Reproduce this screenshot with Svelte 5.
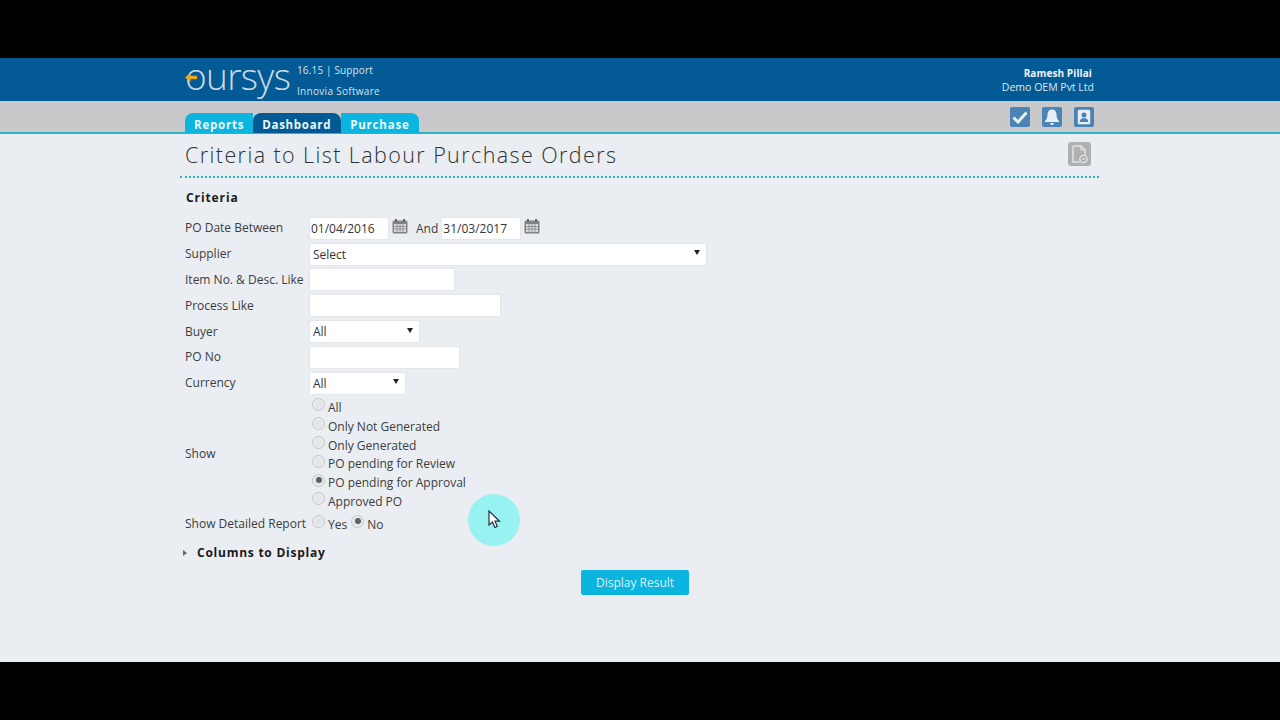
<script>
	const showOptions = [
		'All',
		'Only Not Generated',
		'Only Generated',
		'PO pending for Review',
		'PO pending for Approval',
		'Approved PO'
	];
</script>

{#snippet calendar()}
	<svg class="cal" width="16" height="15" viewBox="0 0 16 15">
		<rect x="0.5" y="1.5" width="15" height="13" rx="1.5" fill="#808285" />
		<rect x="3" y="0" width="2" height="3" fill="#67696c" />
		<rect x="11" y="0" width="2" height="3" fill="#67696c" />
		<rect x="2" y="5" width="12" height="8" fill="#dcdedf" />
		<path d="M2 7.5h12M2 10h12M5 5v8M8 5v8M11 5v8" stroke="#808285" stroke-width="0.8" />
	</svg>
{/snippet}

{#snippet radio(checked)}
	<span class="radio" class:checked></span>
{/snippet}

<div class="screen">
	<div class="bar"></div>
	<div class="app">
		<header class="top">
			<div class="brand">
				<div class="logo">
					<span class="logo-text">oursys</span>
					<svg class="arrow" width="12" height="11" viewBox="0 0 13 12">
						<path d="M0 6 6 1v3h7v4H6v3z" fill="#f2a51f" />
					</svg>
				</div>
				<div class="meta">
					<div class="version">16.15 | Support</div>
					<div>Innovia Software</div>
				</div>
			</div>
			<div class="user">
				<div class="user-name">Ramesh Pillai</div>
				<div>Demo OEM Pvt Ltd</div>
			</div>
		</header>

		<nav class="nav">
			<div class="tabs">
				<span class="tab first">Reports</span>
				<span class="tab active">Dashboard</span>
				<span class="tab last">Purchase</span>
			</div>
			<div class="nav-icons">
				<span class="nav-icon">
					<svg width="16" height="14" viewBox="0 0 16 14"><path d="M1.5 7.5 6 12 14.500 2.500" fill="none" stroke="#e8eef3" stroke-width="3" /></svg>
				</span>
				<span class="nav-icon">
					<svg width="14" height="16" viewBox="0 0 14 16"><path d="M7 0.500c-3 0-4.500 2-4.500 5 0 3.500-1 5-2.500 6.500v1h14v-1c-1.500-1.500-2.500-3-2.500-6.500 0-3-1.500-5-4.500-5zM5 14a2 2 0 0 0 4 0z" fill="#e8eef3" /></svg>
				</span>
				<span class="nav-icon">
					<svg width="14" height="16" viewBox="0 0 14 16"><rect x="0.800" y="0.800" width="12.400" height="14.400" rx="1.500" fill="#e8eef3" /><circle cx="7" cy="6" r="2.500" fill="#4a84b5" /><path d="M2.800 13c0-3 2-4 4.200-4s4.200 1 4.200 4z" fill="#4a84b5" /></svg>
				</span>
			</div>
		</nav>

		<main class="content">
			<div class="title-row">
				<h1>Criteria to List Labour Purchase Orders</h1>
				<span class="doc-btn">
					<svg width="16" height="19" viewBox="0 0 16 19">
						<path d="M1 1h8l4 4v5M1 1v16h7" fill="none" stroke="#e4e6e8" stroke-width="1.400" />
						<path d="M9 1v4h4" fill="none" stroke="#e4e6e8" stroke-width="1.200" />
						<circle cx="11.500" cy="14" r="3.700" fill="none" stroke="#e4e6e8" stroke-width="1.300" />
						<path d="M9.800 14h3.400" stroke="#e4e6e8" stroke-width="1.200" />
					</svg>
				</span>
			</div>

			<h2>Criteria</h2>

			<div class="form">
				<label for="from">PO Date Between</label>
				<div class="control">
					<input id="from" class="date" value="01/04/2016" />
					{@render calendar()}
					<span class="and">And</span>
					<input class="date" value="31/03/2017" />
					{@render calendar()}
				</div>

				<span class="lbl">Supplier</span>
				<div class="control"><div class="select supplier"><span>Select</span><i></i></div></div>

				<label for="item">Item No. &amp; Desc. Like</label>
				<div class="control"><input id="item" class="item" /></div>

				<label for="process">Process Like</label>
				<div class="control"><input id="process" class="process" /></div>

				<span class="lbl">Buyer</span>
				<div class="control"><div class="select buyer"><span>All</span><i></i></div></div>

				<label for="pono">PO No</label>
				<div class="control"><input id="pono" class="pono" /></div>

				<span class="lbl">Currency</span>
				<div class="control"><div class="select currency"><span>All</span><i></i></div></div>

				<span class="lbl">Show</span>
				<div class="radios">
					{#each showOptions as option}
						<div class="radio-row">
							{@render radio(option === 'PO pending for Approval')}
							<span>{option}</span>
						</div>
					{/each}
				</div>

				<span class="lbl">Show Detailed Report</span>
				<div class="radio-inline">
					{@render radio(false)}
					<span class="yes">Yes</span>
					{@render radio(true)}
					<span>No</span>
				</div>
			</div>

			<div class="columns">
				<span class="caret"></span>
				<span>Columns to Display</span>
			</div>

			<div class="actions">
				<button>Display Result</button>
			</div>

			<div class="pointer">
				<svg width="13" height="19" viewBox="0 0 13 19">
					<path d="M1 1v14l3.500-3 2.300 5.500 2.500-1-2.300-5.300h4.500z" fill="#fff" stroke="#22333b" stroke-width="1.200" />
				</svg>
			</div>
		</main>
	</div>
	<div class="bar"></div>
</div>

<style>
	:global(body) {
		background: #000;
	}
	.screen {
		width: 1280px;
		height: 720px;
		display: flex;
		flex-direction: column;
		font-family: 'Open Sans', sans-serif;
		font-size: 12px;
		color: #3a3d40;
		overflow: hidden;
	}
	.bar {
		height: 58px;
		background: #000;
		flex: none;
	}
	.app {
		flex: 1;
		display: flex;
		flex-direction: column;
		background: #eaedf1;
	}
	.top {
		height: 43px;
		background: #035a94;
		display: flex;
		justify-content: space-between;
		padding: 0 186px 0 184px;
		color: #dfe9f1;
		flex: none;
	}
	.brand {
		display: flex;
		gap: 7px;
	}
	.logo {
		position: relative;
		width: 106px;
		height: 43px;
	}
	.logo-text {
		position: absolute;
		left: 1px;
		top: -4px;
		font-weight: 300;
		font-size: 37px;
		line-height: 44px;
		letter-spacing: -0.7px;
		color: #c9dbe8;
	}
	.arrow {
		position: absolute;
		left: 1px;
		top: 14px;
	}
	.meta {
		font-size: 10px;
		line-height: 21px;
		padding-top: 2px;
		letter-spacing: 0.3px;
		color: #d5e2ec;
	}
	.version {
		letter-spacing: 0.15px;
	}
	.user {
		text-align: right;
		font-size: 10.500px;
		line-height: 14px;
		padding-top: 8px;
	}
	.user-name {
		font-weight: 700;
		font-size: 10px;
		letter-spacing: 0.1px;
		padding-right: 2px;
		color: #f0f4f7;
	}
	.nav {
		height: 33px;
		flex: none;
		background: #c9c9cc;
		border-bottom: 2px solid #2eb4c4;
		box-sizing: border-box;
		display: flex;
		justify-content: space-between;
		padding: 0 185px;
	}
	.tabs {
		display: flex;
		align-items: flex-start;
		padding-top: 12px;
	}
	.tab {
		height: 20px;
		line-height: 23px;
		padding: 0 9px;
		background: #0bb5e0;
		color: #eef9fc;
		font-weight: 700;
		font-size: 11.500px;
		letter-spacing: 0.8px;
	}
	.tab.first {
		border-radius: 8px 0 0 0;
	}
	.tab.active {
		background: #035a94;
		border-radius: 8px 8px 0 0;
		padding: 0 10px 0 9px;
		letter-spacing: 0.7px;
	}
	.tab.last {
		border-radius: 0 8px 0 0;
	}
	.nav-icons {
		display: flex;
		gap: 12px;
		padding: 6px 0 0;
		margin-right: 1px;
	}
	.nav-icon {
		width: 20px;
		height: 20px;
		background: #4a84b5;
		border-radius: 2px;
		display: flex;
		align-items: center;
		justify-content: center;
	}
	.content {
		position: relative;
		flex: 1;
		padding: 0 181px 0 180px;
	}
	.title-row {
		height: 44px;
		border-bottom: 2px dotted #2eb4c4;
		box-sizing: border-box;
		display: flex;
		justify-content: space-between;
		align-items: flex-start;
		padding: 7px 8px 0 5px;
	}
	h1 {
		margin: 0;
		font-size: 21.500px;
		font-weight: 300;
		line-height: 28px;
		letter-spacing: 1.41px;
		color: #2e3134;
	}
	.doc-btn {
		width: 23px;
		height: 24px;
		background: #aeb0b2;
		border-radius: 3px;
		display: flex;
		align-items: center;
		justify-content: center;
		margin-top: 1px;
	}
	h2 {
		margin: 12px 0 0 6px;
		font-size: 12px;
		font-weight: 700;
		line-height: 16px;
		letter-spacing: 0.9px;
		color: #1a1a1a;
	}
	.form {
		display: grid;
		grid-template-columns: 124px 1fr;
		margin: 9.500px 0 0 5px;
		align-items: center;
	}
	.form label,
	.lbl {
		line-height: 16px;
	}
	.control {
		display: flex;
		align-items: center;
		height: 25.800px;
	}
	input,
	.select {
		box-sizing: border-box;
		height: 23px;
		background: #fff;
		border: 1px solid #e4e6e9;
		font: inherit;
		color: #333;
		margin: 0;
		outline: none;
	}
	input.date {
		width: 80px;
		padding: 0 1px;
	}
	.date + .cal {
		margin: -4px 0 0 2.500px;
	}
	.cal {
		flex: none;
	}
	.and {
		margin: 0 3px 0 8.500px;
	}
	.select {
		display: flex;
		align-items: center;
		justify-content: space-between;
		padding: 0 6px 0 3px;
	}
	.select i {
		width: 0;
		height: 0;
		border-left: 3px solid transparent;
		border-right: 3px solid transparent;
		border-top: 5px solid #222;
		margin-top: -3px;
	}
	.supplier {
		width: 398px;
	}
	.buyer {
		width: 111px;
	}
	.currency {
		width: 97px;
	}
	input.item {
		width: 146px;
	}
	input.process {
		width: 192px;
	}
	input.pono {
		width: 151px;
	}
	.radios {
		display: flex;
		flex-direction: column;
		margin-top: 2.500px;
	}
	.radio-row {
		height: 18.800px;
		display: flex;
		align-items: center;
		gap: 3px;
		line-height: 16px;
	}
	.radio {
		box-sizing: border-box;
		width: 13px;
		height: 13px;
		flex: none;
		margin: -6px 0 0 3px;
		border-radius: 50%;
		border: 1px solid #c3c6c9;
		background: #e3e5e8;
		box-shadow: inset 0 0 2px #fff;
		position: relative;
	}
	.radio.checked::after {
		content: '';
		position: absolute;
		inset: 2.500px;
		border-radius: 50%;
		background: #5c5f63;
	}
	.radio-inline {
		display: flex;
		align-items: center;
		gap: 3px;
		height: 25.800px;
	}
	.yes {
		margin-right: -2px;
	}
	.columns {
		display: flex;
		align-items: center;
		gap: 10px;
		margin: 8px 0 0 3px;
		font-weight: 700;
		font-size: 12px;
		letter-spacing: 0.75px;
		color: #1a1a1a;
		line-height: 16px;
	}
	.caret {
		width: 0;
		height: 0;
		border-top: 3px solid transparent;
		border-bottom: 3px solid transparent;
		border-left: 4px solid #666;
	}
	.actions {
		display: flex;
		justify-content: center;
		margin-top: 9px;
		padding-right: 9px;
	}
	button {
		width: 108px;
		height: 25px;
		background: #0bb5e0;
		border: 0;
		border-radius: 2px;
		color: #d8f2f9;
		font: inherit;
		padding: 0;
	}
	.pointer {
		position: absolute;
		left: 468px;
		top: 360px;
		width: 52px;
		height: 52px;
		border-radius: 50%;
		background: #99f2f2;
	}
	.pointer svg {
		position: absolute;
		left: 20px;
		top: 16px;
	}
</style>
